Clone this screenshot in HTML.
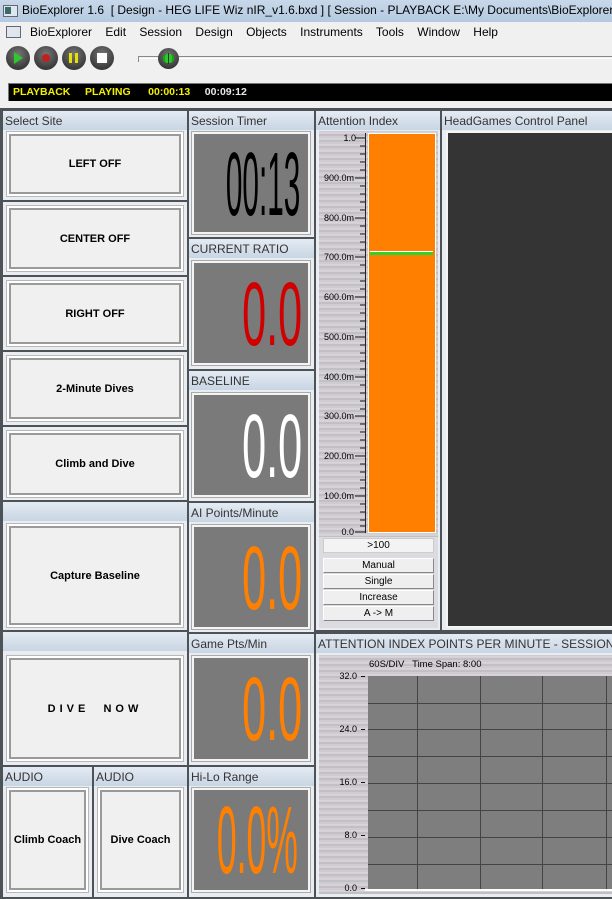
<!DOCTYPE html>
<html><head><meta charset="utf-8"><style>
*{margin:0;padding:0;box-sizing:border-box}
body{width:612px;height:899px;overflow:hidden;background:#f0f0f0;font-family:"Liberation Sans",sans-serif;position:relative}
.a{position:absolute}
.clip{position:absolute;overflow:hidden;white-space:nowrap}
.sec{position:absolute;background:#e9edf2;border:2px solid #4d5257;overflow:hidden}
.hd{position:absolute;left:0;right:0;top:0;height:19px;background:linear-gradient(#e4ebf3,#c8d5e3);font-size:12px;color:#333;padding:3px 0 0 2px;white-space:nowrap;overflow:hidden}
.btn{position:absolute;background:#f0f0f0;border:2px solid #fff;outline:2px solid #9a9a9a;outline-offset:-4px;box-shadow:inset 0 0 0 3px #f0f0f0, 0 0 0 1px #b8b8b8;display:flex;align-items:center;justify-content:center;font-weight:bold;font-size:11px;color:#000}
.disp{position:absolute;background:#7a7a7a;border:2px solid #f4f4f4;box-shadow:0 0 0 1px #aaa;overflow:hidden}
.dig{position:absolute;right:6px;font-size:90px;line-height:90px;transform-origin:right center;white-space:nowrap}
.metal{background:repeating-linear-gradient(180deg,#c9c5cc 0px,#dcd9de 2px,#bbb7be 4px,#d6d3d8 6px)}
.sb{position:absolute;left:323px;width:111px;height:15px;background:#efefef;border:1px solid #fff;border-right-color:#888;border-bottom-color:#888;font-size:10px;text-align:center;line-height:13px;color:#000}
</style></head><body>
<!-- title bar -->
<div class="a" style="left:0;top:0;width:612px;height:22px;background:linear-gradient(#c8d8ea,#b4c9e0)"></div>
<div class="a" style="left:3px;top:5px;width:15px;height:12px;background:#dfe6ee;border:1px solid #667"></div>
<div class="a" style="left:5px;top:7px;width:6px;height:7px;background:#3a6a6a"></div>
<div class="clip" style="left:22px;top:3px;width:590px;font-size:12px;color:#000">BioExplorer 1.6&nbsp; [ Design - HEG LIFE Wiz nIR_v1.6.bxd ] [ Session - PLAYBACK E:\My Documents\BioExplorer\Session</div>
<!-- menu -->
<div class="a" style="left:0;top:22px;width:612px;height:20px;background:#f0f0f0"></div>
<div class="a" style="left:6px;top:26px;width:15px;height:12px;background:#dfe6ee;border:1px solid #667"></div>
<div class="clip" style="left:30px;top:25px;width:580px;font-size:12px">BioExplorer&nbsp;&nbsp;&nbsp; Edit&nbsp;&nbsp;&nbsp; Session&nbsp;&nbsp;&nbsp; Design&nbsp;&nbsp;&nbsp; Objects&nbsp;&nbsp;&nbsp; Instruments&nbsp;&nbsp;&nbsp; Tools&nbsp;&nbsp;&nbsp; Window&nbsp;&nbsp;&nbsp; Help</div>
<!-- toolbar -->
<div class="a" style="left:6px;top:46px;width:24px;height:24px;border-radius:50%;background:radial-gradient(circle at 50% 35%,#777,#222)"></div>
<div class="a" style="left:14px;top:52px;width:0;height:0;border-left:9px solid #2dc82d;border-top:6px solid transparent;border-bottom:6px solid transparent"></div>
<div class="a" style="left:34px;top:46px;width:24px;height:24px;border-radius:50%;background:radial-gradient(circle at 50% 35%,#777,#222)"></div>
<div class="a" style="left:42px;top:54px;width:8px;height:8px;border-radius:50%;background:#c02020"></div>
<div class="a" style="left:62px;top:46px;width:24px;height:24px;border-radius:50%;background:radial-gradient(circle at 50% 35%,#777,#222)"></div>
<div class="a" style="left:69px;top:53px;width:3px;height:10px;background:#e8e000"></div>
<div class="a" style="left:75px;top:53px;width:3px;height:10px;background:#e8e000"></div>
<div class="a" style="left:90px;top:46px;width:24px;height:24px;border-radius:50%;background:radial-gradient(circle at 50% 35%,#777,#222)"></div>
<div class="a" style="left:97px;top:53px;width:10px;height:10px;background:#fff"></div>
<div class="a" style="left:138px;top:56px;width:474px;height:3px;border-top:1px solid #888;border-bottom:1px solid #fff"></div>
<div class="a" style="left:138px;top:56px;width:1px;height:6px;background:#888"></div>
<div class="a" style="left:158px;top:48px;width:21px;height:21px;border-radius:50%;background:radial-gradient(circle at 50% 35%,#777,#222)"></div>
<div class="a" style="left:163px;top:54px;width:11px;height:9px;border-radius:4px;background:#2dc82d;border-left:2px solid #1a1;border-right:2px solid #1a1"></div>
<div class="a" style="left:168px;top:53px;width:1px;height:11px;background:#333"></div>
<!-- status -->
<div class="a" style="left:0;top:78px;width:612px;height:32px;background:#f0f0f0"></div>
<div class="a" style="left:8px;top:83px;width:604px;height:18px;background:#000;border-top:1px solid #777;border-left:1px solid #777"></div>
<div class="clip" style="left:13px;top:86px;width:590px;font-size:10.5px;font-weight:bold;color:#f0f000">PLAYBACK&nbsp;&nbsp;&nbsp;&nbsp; PLAYING&nbsp;&nbsp;&nbsp;&nbsp;&nbsp; 00:00:13&nbsp;&nbsp;&nbsp;&nbsp; <span style="color:#e8e8e8">00:09:12</span></div>
<div class="a" style="left:0;top:108px;width:612px;height:791px;background:#4d5257"></div>

<!-- LEFT column -->
<div class="sec" style="left:1px;top:109px;width:188px;height:93px"><div class="hd">Select Site</div></div>
<div class="btn" style="left:7px;top:132px;width:176px;height:64px">LEFT OFF</div>
<div class="sec" style="left:1px;top:200px;width:188px;height:77px"></div>
<div class="btn" style="left:7px;top:206px;width:176px;height:65px">CENTER OFF</div>
<div class="sec" style="left:1px;top:275px;width:188px;height:77px"></div>
<div class="btn" style="left:7px;top:281px;width:176px;height:65px">RIGHT OFF</div>
<div class="sec" style="left:1px;top:350px;width:188px;height:77px"></div>
<div class="btn" style="left:7px;top:356px;width:176px;height:65px">2-Minute Dives</div>
<div class="sec" style="left:1px;top:425px;width:188px;height:77px"></div>
<div class="btn" style="left:7px;top:431px;width:176px;height:66px">Climb and Dive</div>
<div class="sec" style="left:1px;top:500px;width:188px;height:132px"><div class="hd"></div></div>
<div class="btn" style="left:7px;top:524px;width:176px;height:103px">Capture Baseline</div>
<div class="sec" style="left:1px;top:630px;width:188px;height:137px"><div class="hd"></div></div>
<div class="btn" style="left:7px;top:656px;width:176px;height:105px;letter-spacing:4px">DIVE&nbsp; NOW</div>
<div class="sec" style="left:1px;top:765px;width:93px;height:134px"><div class="hd">AUDIO</div></div>
<div class="btn" style="left:7px;top:788px;width:81px;height:104px">Climb Coach</div>
<div class="sec" style="left:92px;top:765px;width:97px;height:134px"><div class="hd">AUDIO</div></div>
<div class="btn" style="left:98px;top:788px;width:85px;height:104px">Dive Coach</div>

<!-- column 2 -->
<div class="sec" style="left:187px;top:109px;width:129px;height:130px"><div class="hd">Session Timer</div></div>
<div class="disp" style="left:192px;top:132px;width:118px;height:102px"><div class="dig" style="color:#000;top:6px;right:8px;transform:scaleX(0.33)">00:13</div></div>
<div class="sec" style="left:187px;top:237px;width:129px;height:134px"><div class="hd">CURRENT RATIO</div></div>
<div class="disp" style="left:192px;top:261px;width:118px;height:104px"><div class="dig" style="color:#d00000;top:7px;transform:scaleX(0.48)">0.0</div></div>
<div class="sec" style="left:187px;top:369px;width:129px;height:134px"><div class="hd">BASELINE</div></div>
<div class="disp" style="left:192px;top:393px;width:118px;height:104px"><div class="dig" style="color:#fff;top:7px;transform:scaleX(0.48)">0.0</div></div>
<div class="sec" style="left:187px;top:501px;width:129px;height:133px"><div class="hd">AI Points/Minute</div></div>
<div class="disp" style="left:192px;top:525px;width:118px;height:104px"><div class="dig" style="color:#ff8000;top:7px;transform:scaleX(0.48)">0.0</div></div>
<div class="sec" style="left:187px;top:632px;width:129px;height:135px"><div class="hd">Game Pts/Min</div></div>
<div class="disp" style="left:192px;top:656px;width:118px;height:105px"><div class="dig" style="color:#ff8000;top:7px;transform:scaleX(0.48)">0.0</div></div>
<div class="sec" style="left:187px;top:765px;width:129px;height:134px"><div class="hd">Hi-Lo Range</div></div>
<div class="disp" style="left:192px;top:788px;width:118px;height:104px"><div class="dig" style="color:#ff8000;top:6px;right:10px;font-size:96px;transform:scaleX(0.37)">0.0%</div></div>

<!-- column 3 attention index -->
<div class="sec" style="left:314px;top:109px;width:128px;height:523px"><div class="hd">Attention Index</div></div>
<div class="a metal" style="left:319px;top:131px;width:119px;height:406px"></div>
<div class="a" style="left:368px;top:133px;width:68px;height:400px;background:#ff8000;border:1px solid #fff"></div>
<div class="a" style="left:370px;top:251px;width:63px;height:4px;background:#2ed12e;border-top:1px solid #fff"></div>
<div class="a" style="left:365px;top:133px;width:1px;height:400px;background:#222"></div>
<svg class="a" style="left:320px;top:130px" width="50" height="410">
<g stroke="#111" stroke-width="1">
<path d="M35 8h10M35 48h10M35 88h10M35 127h10M35 167h10M35 207h10M35 247h10M35 286h10M35 326h10M35 366h10M35 402h10"/>
<path d="M40 16h5M40 24h5M40 32h5M40 40h5M40 56h5M40 64h5M40 72h5M40 80h5M40 96h5M40 104h5M40 112h5M40 120h5M40 135h5M40 143h5M40 151h5M40 159h5M40 175h5M40 183h5M40 191h5M40 199h5M40 215h5M40 223h5M40 231h5M40 239h5M40 255h5M40 263h5M40 271h5M40 279h5M40 294h5M40 302h5M40 310h5M40 318h5M40 334h5M40 342h5M40 350h5M40 358h5M40 374h5M40 382h5M40 390h5M40 396h5"/>
</g>
<g font-family="Liberation Sans" font-size="9" text-anchor="end" fill="#000">
<text x="36" y="11">1.0</text><text x="34" y="51">900.0m</text><text x="34" y="91">800.0m</text><text x="34" y="130">700.0m</text><text x="34" y="170">600.0m</text><text x="34" y="210">500.0m</text><text x="34" y="250">400.0m</text><text x="34" y="289">300.0m</text><text x="34" y="329">200.0m</text><text x="34" y="369">100.0m</text><text x="34" y="405">0.0</text>
</g></svg>
<div class="a" style="left:319px;top:537px;width:119px;height:91px;background:#dcdbe0"></div>
<div class="sb" style="top:538px;background:#f3f3f3;border:1px solid #ccc">&gt;100</div>
<div class="sb" style="top:558px">Manual</div>
<div class="sb" style="top:574px">Single</div>
<div class="sb" style="top:590px">Increase</div>
<div class="sb" style="top:606px">A -&gt; M</div>

<!-- column 4 -->
<div class="sec" style="left:440px;top:109px;width:174px;height:523px"><div class="hd">HeadGames Control Panel</div></div>
<div class="a" style="left:446px;top:131px;width:166px;height:497px;background:#343434;border:2px solid #f4f4f4;border-right:none"></div>

<!-- chart -->
<div class="sec" style="left:314px;top:632px;width:300px;height:267px"><div class="hd">ATTENTION INDEX POINTS PER MINUTE - SESSION</div></div>
<div class="a metal" style="left:319px;top:655px;width:293px;height:239px"></div>
<div class="a" style="left:369px;top:659px;font-size:9.5px;white-space:nowrap">60S/DIV&nbsp;&nbsp; Time Span: 8:00</div>
<svg class="a" style="left:319px;top:670px" width="293" height="225">
<rect x="49" y="6" width="244" height="214" fill="#7e7e7e"/>
<g stroke="#444" stroke-width="1">
<path d="M49 33.5h244M49 59.5h244M49 86.5h244M49 113.5h244M49 140.5h244M49 167.5h244M49 194.5h244M98.5 6v214M161.5 6v214M223.5 6v214M287.5 6v214"/>
</g>
<path d="M46 220h247" stroke="#fff" stroke-width="2"/>
<g stroke="#111"><path d="M42 6.5h4M42 59.5h4M42 112.5h4M42 165.5h4M42 218.5h4"/></g>
<g font-family="Liberation Sans" font-size="9" text-anchor="end" fill="#000">
<text x="38" y="9">32.0</text><text x="38" y="62">24.0</text><text x="38" y="115">16.0</text><text x="38" y="168">8.0</text><text x="38" y="221">0.0</text>
</g></svg>
</body></html>
